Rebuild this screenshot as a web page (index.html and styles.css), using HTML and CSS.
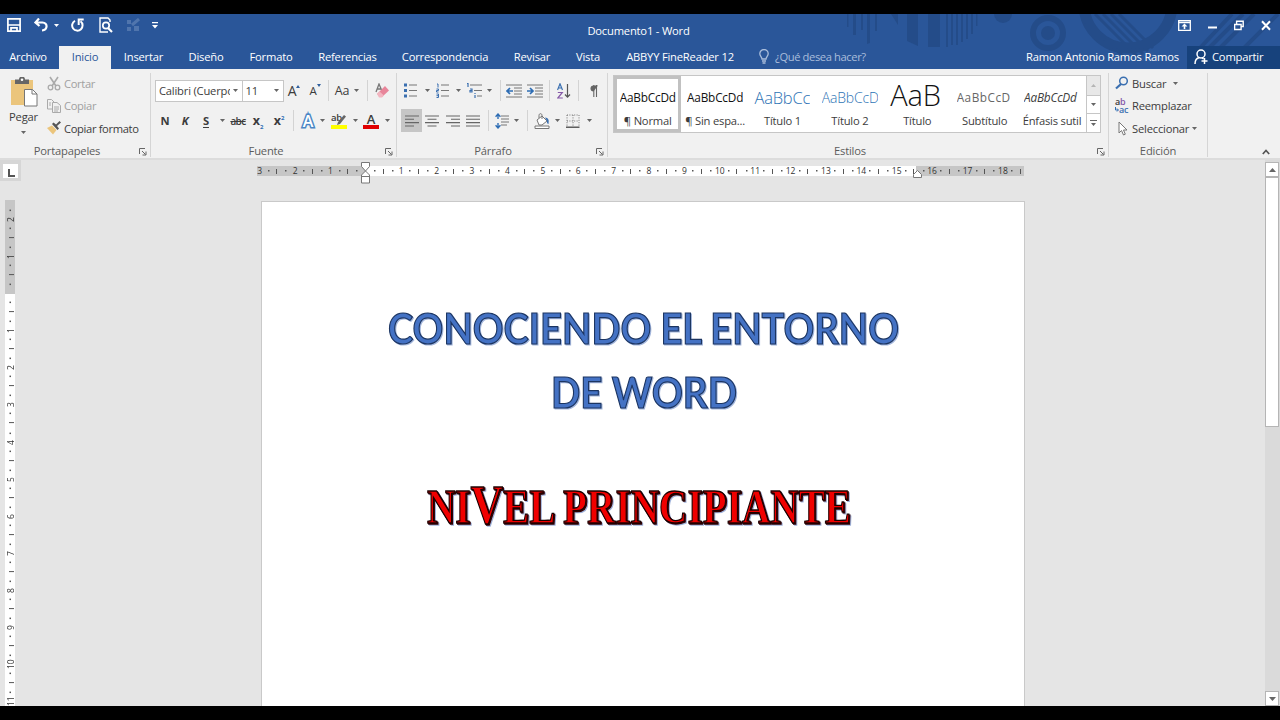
FILE: index.html
```
<!DOCTYPE html>
<html lang="es">
<head>
    <meta charset="UTF-8">
    <meta name="viewport" content="width=device-width, initial-scale=1.0">
    <title>Documento1 - Word</title>
    <link rel="stylesheet" href="styles.css">
</head>
<body>

    <!-- shared icons -->
    <svg width="0" height="0" class="defs">
        <symbol id="down" viewBox="0 0 5 3"><path d="M0 0h5L2.5 3z"/></symbol>
        <symbol id="launch" viewBox="0 0 8 8"><path d="M.5 6V.5H6M3 3l3.5 3.5M7 3.5V7H3.5" fill="none" stroke="#666"/></symbol>
    </svg>

    <div class="app">
        <header class="top">
            <svg class="pattern" width="440" height="55" viewBox="840 14 440 55">
                <g fill="#244c89">
                    <path d="M847 14h1.500v13h-1.500zM853 14h3v21h-3zM861 14h2v16h-2zM867 14h3v29l-3 1zM875 14h2v17h-2zM891 14h7v11zM907 14h11v32l-11-5zM928 14h12v33h-12zM946 14h2v33h-2zM951 14h2v31h-2zM956 14h2v31h-2zM961 14h2v28h-2zM966 14h2v25h-2zM971 14h2v20h-2zM976 14h1.500v12h-1.500z"/>
                    <circle cx="1003" cy="14" r="9"/>
                    <circle cx="1048" cy="33" r="7"/>
                </g>
                <g fill="none" stroke="#244c89">
                    <circle cx="1048" cy="33" r="15" stroke-width="6"/>
                    <circle cx="1128" cy="4" r="44" stroke-width="11"/>
                    <path d="M1095 14l42 42M1103 14l40 40M1111 14l37 37M1119 14l34 34M1085 22l38 34" stroke-width="3"/>
                    <path d="M1232 14l-32 34M1243 14l-34 34M1254 14l-34 34M1278 14l-34 34" stroke-width="4"/>
                </g>
            </svg>

            <div class="titlebar">
                <div class="quick">
                    <svg width="14" height="14" viewBox="0 0 14 14"><path d="M.9.9h12.200v12.200H.9zM1 7h12M4 13V9.800h6V13" fill="none" stroke="#fff" stroke-width="1.700"/></svg>
                    <svg width="14" height="14" viewBox="0 0 14 14"><path d="M5 .5L1.500 4.500 5.500 8M2 4.500h6.500c5.500 0 5.500 7.500-.5 8" fill="none" stroke="#fff" stroke-width="2.200"/></svg>
                    <svg class="w" width="5" height="3"><use href="#down"/></svg>
                    <svg width="14" height="14" viewBox="0 0 14 14"><path d="M4 2.800a5.200 5.200 0 1 0 5.500.5M7.700 7V1.500h5" fill="none" stroke="#fff" stroke-width="2"/></svg>
                    <svg width="14" height="16" viewBox="0 0 14 16"><path d="M11 5V3L9 1H1v14h8" fill="none" stroke="#fff" stroke-width="1.400"/><circle cx="7" cy="8.500" r="3.200" fill="none" stroke="#fff" stroke-width="1.700"/><path d="M9 11l4 4" stroke="#fff" stroke-width="2.200"/></svg>
                    <svg width="14" height="14" viewBox="0 0 14 14" opacity=".3"><path d="M1 2h4v4H1zM1 9h4v4H1zM8 8h5v5H8z" fill="#a9bddb"/><path d="M6 7l7-6" stroke="#a9bddb" stroke-width="3"/></svg>
                    <svg width="6" height="7" viewBox="0 0 6 7"><path d="M0 0h6v1.300H0zM0 3h6L3 6.500z" fill="#fff"/></svg>
                </div>
                <div class="doc-name">Documento1 - Word</div>
                <div class="window">
                    <svg width="13" height="11" viewBox="0 0 13 11"><path d="M.7.7h11.600v9.600H.7zM.7 2.500h11.600" fill="none" stroke="#fff" stroke-width="1.300"/><path d="M6.500 3.500l3 3H7.300V9H5.700V6.500H3.500z" fill="#fff"/></svg>
                    <svg width="9" height="11" viewBox="0 0 9 11"><path d="M0 6.500h9v2H0z" fill="#fff"/></svg>
                    <svg width="10" height="11" viewBox="0 0 10 11"><path d="M.6 4.500h6.500v5H.6zM2.600 4V1.300h6.600v5.200H7" fill="none" stroke="#fff" stroke-width="1.400"/></svg>
                    <svg width="10" height="11" viewBox="0 0 10 11"><path d="M1 1.200l8 8.600M9 1.200L1 9.800" stroke="#fff" stroke-width="2"/></svg>
                </div>
            </div>

            <nav class="tabs">
                <div>Archivo</div>
                <div class="active">Inicio</div>
                <div>Insertar</div>
                <div>Diseño</div>
                <div>Formato</div>
                <div>Referencias</div>
                <div>Correspondencia</div>
                <div>Revisar</div>
                <div>Vista</div>
                <div>ABBYY FineReader 12</div>
                <div class="tell">
                    <svg width="10" height="15" viewBox="0 0 10 15"><path d="M3 10C3 8 .8 7 .8 4.700a4.200 4.200 0 0 1 8.400 0C9.200 7 7 8 7 10zM3 12h4M3.500 14h3" fill="none" stroke="#a9bddb" stroke-width="1.300"/></svg>
                    ¿Qué desea hacer?
                </div>
                <div class="user">Ramon Antonio Ramos Ramos</div>
                <div class="share">
                    <svg width="14" height="16" viewBox="0 0 14 16"><circle cx="7" cy="5" r="4" fill="none" stroke="#fff" stroke-width="1.500"/><path d="M1 15c0-4 2-6 4.500-6.500M8 9l1.500 1M10.500 9v6M7.500 12h6" fill="none" stroke="#fff" stroke-width="1.500"/></svg>
                    Compartir
                </div>
            </nav>
        </header>

        <section class="ribbon">
            <div class="group clipboard">
                <div class="clip-body">
                    <div class="paste">
                        <svg width="28" height="30" viewBox="0 0 28 30"><path d="M1 3h22v25H1z" fill="#ebc57c"/><path d="M5 2.500h4a3 3 0 0 1 6 0h4V7H5z" fill="#666"/><circle cx="12" cy="2.800" r="1.300" fill="#fff"/><path d="M14.500 12.500h8l4.500 4.500v12H14.500z" fill="#fff" stroke="#777"/><path d="M22 12.500V17h5" fill="none" stroke="#777"/></svg>
                        <span>Pegar</span>
                        <svg width="5" height="3"><use href="#down"/></svg>
                    </div>
                    <div class="clip-list">
                        <div class="off">
                            <svg width="14" height="15" viewBox="0 0 14 15"><path d="M3 1l6 9M11 1L5 10" fill="none" stroke="#aaa" stroke-width="1.600"/><circle cx="3.500" cy="11.500" r="2.300" fill="none" stroke="#aaa" stroke-width="1.300"/><circle cx="10.500" cy="11.500" r="2.300" fill="none" stroke="#aaa" stroke-width="1.300"/></svg>
                            Cortar
                        </div>
                        <div class="off">
                            <svg width="14" height="14" viewBox="0 0 14 14"><path d="M5 10H.5V.5h4L7 3M5.500 3.500H10l3.500 3v7h-8zM2 4h2M2 6h2M7 8h5M7 10h5M7 12h4" fill="none" stroke="#aaa"/></svg>
                            Copiar
                        </div>
                        <div>
                            <svg width="14" height="14" viewBox="0 0 14 14"><path d="M0 7l5-2.500 4.500 4.500L6 13.500z" fill="#ebc57c"/><path d="M5 3l5.500 6 1.500-1.500L10 5l4-3.500L12.500 0 9 3.500 6.500 1.500z" fill="#555"/></svg>
                            Copiar formato
                        </div>
                    </div>
                </div>
                <footer>Portapapeles<svg class="launch" width="8" height="8"><use href="#launch"/></svg></footer>
            </div>

            <div class="group font">
                <div class="row font-1">
                    <div class="combo"><span>Calibri (Cuerpo)</span><svg width="5" height="3"><use href="#down"/></svg></div>
                    <div class="combo size"><span>11</span><svg width="5" height="3"><use href="#down"/></svg></div>
                    <div class="grow">A<svg width="4" height="3" viewBox="0 0 4 3"><path d="M0 3h4L2 0z" fill="#2f5f9e"/></svg></div>
                    <div class="grow small">A<svg width="4" height="3" viewBox="0 0 4 3"><path d="M0 0h4L2 3z" fill="#2f5f9e"/></svg></div>
                    <i></i>
                    <div class="case">Aa</div>
                    <svg width="5" height="3"><use href="#down"/></svg>
                    <i></i>
                    <svg width="14" height="16" viewBox="0 0 14 16"><path d="M1 9l3-8 3 7M2 6h4" fill="none" stroke="#777" stroke-width="1.300"/><path d="M2 11l8-8 4 4.500-7 6.500z" fill="#e8859a"/><path d="M2 11l2.500-2.500 4.500 4L7 14.500H4z" fill="#f3b5c0"/></svg>
                </div>
                <div class="row font-2">
                    <b>N</b>
                    <b class="it">K</b>
                    <b class="un">S</b>
                    <svg width="5" height="3"><use href="#down"/></svg>
                    <span class="strike">abc</span>
                    <b class="idx">x<sub>2</sub></b>
                    <b class="idx">x<sup>2</sup></b>
                    <i></i>
                    <span class="effect">A</span>
                    <svg width="5" height="3"><use href="#down"/></svg>
                    <div class="mark yellow">ab<svg width="10" height="10" viewBox="0 0 10 10"><path d="M0 10l1-3 6-7 2 1.500L3 9z" fill="#666"/></svg></div>
                    <svg width="5" height="3"><use href="#down"/></svg>
                    <div class="mark red">A</div>
                    <svg width="5" height="3"><use href="#down"/></svg>
                </div>
                <footer>Fuente<svg class="launch" width="8" height="8"><use href="#launch"/></svg></footer>
            </div>

            <div class="group para">
                <div class="row para-1">
                    <svg width="14" height="15" viewBox="0 0 14 15"><path d="M0 .5h3v3H0zM0 6h3v3H0zM0 11.500h3v3H0z" fill="#3a6fb0"/><path d="M5 2h8M5 7.500h8M5 13h8" stroke="#777" stroke-width="1.200"/></svg>
                    <svg width="5" height="3"><use href="#down"/></svg>
                    <svg width="14" height="15" viewBox="0 0 14 15"><path d="M1 1h1v3.500M.5 6h2v1.500h-2V9h2M.5 11h2v3.500h-2M.5 12.700h2" fill="none" stroke="#3a6fb0"/><path d="M5 2h8M5 7.500h8M5 13h8" stroke="#777" stroke-width="1.200"/></svg>
                    <svg width="5" height="3"><use href="#down"/></svg>
                    <svg width="17" height="15" viewBox="0 0 17 15"><path d="M1 .5h1V4M4 6h2v3H4V7.500h2M9 10v1M9 12v3" fill="none" stroke="#3a6fb0" stroke-width="1.200"/><path d="M4 2h12M8 7.500h8M11 13h5" stroke="#777" stroke-width="1.200"/></svg>
                    <svg width="5" height="3"><use href="#down"/></svg>
                    <i></i>
                    <svg width="16" height="14" viewBox="0 0 16 14"><path d="M0 1h16M8 4h8M8 7h8M8 10h8M0 13h16" stroke="#777"/><path d="M7 7H1.500M4 4L1 7l3 3" fill="none" stroke="#2e6db4" stroke-width="1.700"/></svg>
                    <svg width="16" height="14" viewBox="0 0 16 14"><path d="M0 1h16M8 4h8M8 7h8M8 10h8M0 13h16" stroke="#777"/><path d="M0 7h5.500M3 4l3 3-3 3" fill="none" stroke="#2e6db4" stroke-width="1.700"/></svg>
                    <i></i>
                    <svg width="14" height="16" viewBox="0 0 14 16"><path d="M.5 7L3 .8 5.500 7M1.500 5h3" fill="none" stroke="#3a6fb0" stroke-width="1.200"/><path d="M.8 9.500h4.500L.8 15h5" fill="none" stroke="#8659a8" stroke-width="1.200"/><path d="M10.500 1v13M8 11.500l2.500 2.700 2.500-2.700" fill="none" stroke="#555" stroke-width="1.200"/></svg>
                    <i></i>
                    <svg width="9" height="12" viewBox="0 0 9 12"><path d="M4.500 6.500a3 3 0 0 1 0-6H9" fill="#666"/><path d="M4.800 0v12M7.500 0v12" stroke="#666" stroke-width="1.100"/></svg>
                </div>
                <div class="row para-2">
                    <div class="on"><svg width="14" height="12" viewBox="0 0 14 12"><path d="M0 1h14M0 4.300h9M0 7.600h14M0 11h9" stroke="#666" stroke-width="1.100"/></svg></div>
                    <svg width="14" height="12" viewBox="0 0 14 12"><path d="M0 1h14M2.500 4.300h9M0 7.600h14M2.500 11h9" stroke="#666" stroke-width="1.100"/></svg>
                    <svg width="14" height="12" viewBox="0 0 14 12"><path d="M0 1h14M5 4.300h9M0 7.600h14M5 11h9" stroke="#666" stroke-width="1.100"/></svg>
                    <svg width="14" height="12" viewBox="0 0 14 12"><path d="M0 1h14M0 4.300h14M0 7.600h14M0 11h14" stroke="#666" stroke-width="1.100"/></svg>
                    <i></i>
                    <svg width="14" height="16" viewBox="0 0 14 16"><path d="M3 1v5M3 10v5M.6 3.700L3 1l2.400 2.700M.6 12.300L3 15l2.400-2.700" fill="none" stroke="#2e6db4" stroke-width="1.400"/><path d="M6 3h8M6 6h8M6 9h8M6 12h6" stroke="#777"/></svg>
                    <svg width="5" height="3"><use href="#down"/></svg>
                    <i></i>
                    <svg width="16" height="16" viewBox="0 0 16 16"><path d="M3 7l5-4 5 5-5 4H5z" fill="#fff" stroke="#777"/><path d="M5 5V2.500C5 0 8 0 8 2.500V6" fill="none" stroke="#777"/><path d="M11 4.500c4 .5 4 3 3.500 6.500-1 0-2-1.500-1.500-3z" fill="#3a6fb0"/><path d="M1 13h14v2.500H1z" fill="#fff" stroke="#777"/></svg>
                    <svg width="5" height="3"><use href="#down"/></svg>
                    <svg width="14" height="14" viewBox="0 0 14 14"><path d="M1 1h12M1 7h12M1 1v12M7 1v12M13 1v12" fill="none" stroke="#777" stroke-dasharray="1 1.400"/><path d="M0 13.200h13.500" stroke="#444" stroke-width="1.300"/></svg>
                    <svg width="5" height="3"><use href="#down"/></svg>
                </div>
                <footer>Párrafo<svg class="launch" width="8" height="8"><use href="#launch"/></svg></footer>
            </div>

            <div class="group styles">
                <div class="gallery">
                    <div class="style selected"><span class="sample">AaBbCcDd</span><span>¶ Normal</span></div>
                    <div class="style"><span class="sample">AaBbCcDd</span><span>¶ Sin espa...</span></div>
                    <div class="style"><span class="sample h1">AaBbCc</span><span>Título 1</span></div>
                    <div class="style"><span class="sample h2">AaBbCcD</span><span>Título 2</span></div>
                    <div class="style"><span class="sample title">AaB</span><span>Título</span></div>
                    <div class="style"><span class="sample sub">AaBbCcD</span><span>Subtítulo</span></div>
                    <div class="style"><span class="sample em">AaBbCcDd</span><span>Énfasis sutil</span></div>
                    <div class="scroller">
                        <div class="dim"><svg width="5" height="3" viewBox="0 0 5 3"><path d="M0 3h5L2.500 0z" fill="#b5b5b5"/></svg></div>
                        <div><svg width="5" height="3"><use href="#down"/></svg></div>
                        <div><svg width="7" height="7" viewBox="0 0 7 7"><path d="M0 0h7v1H0zM1 3h5L3.500 6z"/></svg></div>
                    </div>
                </div>
                <footer>Estilos<svg class="launch" width="8" height="8"><use href="#launch"/></svg></footer>
            </div>

            <div class="group edit">
                <div class="edit-list">
                    <div>
                        <svg width="14" height="14" viewBox="0 0 14 14"><circle cx="8.500" cy="5" r="3.800" fill="none" stroke="#3a6fb0" stroke-width="1.500"/><path d="M6 8l-5 4.500" stroke="#3a6fb0" stroke-width="2.200"/></svg>
                        Buscar <svg class="far" width="5" height="3"><use href="#down"/></svg>
                    </div>
                    <div>
                        <span class="swap"><span>a<em>b</em></span><span class="to"><svg width="4" height="5" viewBox="0 0 4 5"><path d="M.5 0v3H3M2 1.500L3.500 3 2 4.500" fill="none" stroke="#2e6db4"/></svg>ac</span></span>
                        Reemplazar
                    </div>
                    <div>
                        <svg width="14" height="15" viewBox="0 0 14 15"><path d="M4 1v11l2.500-2.500L8.500 14l1.800-.8L8.500 9H12z" fill="#fff" stroke="#777"/></svg>
                        Seleccionar<svg width="5" height="3"><use href="#down"/></svg>
                    </div>
                </div>
                <footer>Edición</footer>
            </div>

            <svg class="collapse" width="8" height="6" viewBox="0 0 8 6"><path d="M.8 5L4 1.500 7.200 5" fill="none" stroke="#555" stroke-width="1.700"/></svg>
        </section>

        <main class="workspace">
            <div class="left">
                <div class="tab-stop"><span></span></div>
                <div class="vruler" id="vruler"></div>
            </div>
            <div class="canvas">
                <div class="hruler-box">
                    <div class="hruler" id="hruler"></div>
                    <svg class="indent" width="9" height="22" viewBox="0 0 9 22"><path d="M.5.500h8v4L4.500 9l4 4v8h-8v-8l4-4-4-4.500zM.5 14.500h8" fill="#fff" stroke="#777"/></svg>
                    <svg class="indent right" width="9" height="8" viewBox="0 0 9 8"><path d="M.5 7.500v-3l4-4 4 4v3z" fill="#fff" stroke="#777"/></svg>
                </div>
                <div class="page">
                    <svg class="wordart" width="762" height="504" viewBox="262 202 762 504">
                        <g class="heading">
                            <text x="388" y="343.500" textLength="511" lengthAdjust="spacingAndGlyphs">CONOCIENDO EL ENTORNO</text>
                            <text x="551" y="408" textLength="186" lengthAdjust="spacingAndGlyphs">DE WORD</text>
                        </g>
                        <text class="level" x="427" y="523" textLength="424" lengthAdjust="spacingAndGlyphs">NI<tspan class="tall">V</tspan>EL PRINCIPIANTE</text>
                    </svg>
                </div>
            </div>
            <div class="scrollbar">
                <div class="arrow"><svg width="7" height="4" viewBox="0 0 7 4"><path d="M0 4h7L3.500 0z"/></svg></div>
                <div class="thumb"></div>
                <div class="arrow last"><svg width="7" height="4" viewBox="0 0 7 4"><path d="M0 0h7L3.500 4z"/></svg></div>
            </div>
        </main>
    </div>

    <script>
        // one cell per centimetre, the number sits in the middle of its cell
        function fillRuler(id, from, to) {
            const ruler = document.getElementById(id);
            for (let n = from; n <= to; n++) {
                const cell = document.createElement('span');
                cell.className = 'cm';
                cell.textContent = n === 0 ? '' : Math.abs(n);
                ruler.appendChild(cell);
            }
        }

        fillRuler('hruler', -3, 18);
        fillRuler('vruler', -2, 11);
    </script>
</body>
</html>
```
FILE: styles.css
```
* {
    box-sizing: border-box;
}
body {
    margin: 0;
    padding: 14px 0;
    height: 720px;
    background: #000;
    overflow: hidden;
    font-family: 'Open Sans', 'Noto Sans', sans-serif;
    font-size: 11.2px;
    letter-spacing: -0.2px;
    color: #3c3c3c;
    white-space: nowrap;
}
svg {
    display: block;
    flex: none;
    fill: #666;
}
.defs {
    position: absolute;
}
.app {
    display: flex;
    flex-direction: column;
    height: 692px;
    overflow: hidden;
    background: #e5e5e5;
}

/* title bar and tabs */
.top {
    position: relative;
    height: 55px;
    background: #2a5699;
    color: #fff;
}
.pattern {
    position: absolute;
    top: 0;
    right: 0;
}
.titlebar {
    position: relative;
    display: grid;
    grid-template-columns: 500px 277px 1fr;
    height: 32px;
}
.quick {
    display: grid;
    grid-template-columns: 28px 26px 4px 40px 16px 38px 6px;
    place-items: center;
    height: 22px;
}
.quick .w {
    fill: #fff;
}
.doc-name {
    padding-top: 9px;
    line-height: 15px;
    text-align: center;
}
.window {
    display: flex;
    justify-content: flex-end;
    align-items: center;
    gap: 17px;
    height: 22px;
    padding-right: 9px;
}
.tabs {
    position: relative;
    display: grid;
    grid-template-columns: 56px 58px 62px 60px 70px 83px 112px 62px 50px 134px 1fr 161px 93px;
    height: 23px;
    line-height: 21px;
    text-align: center;
}
.tabs .active {
    width: 52px;
    margin-left: 3px;
    background: #f1f1f1;
    color: #2a5699;
}
.tabs div:nth-child(3) {
    margin-left: -3px;
}
.tabs .tell {
    display: flex;
    align-items: center;
    gap: 6px;
    padding: 0 0 2px 12px;
    color: #a9bddb;
    letter-spacing: -0.4px;
}
.tabs .user {
    text-align: left;
}
.tabs .share {
    display: flex;
    align-items: center;
    gap: 4px;
    padding: 0 0 2px 7px;
    background: #17427c;
}

/* ribbon */
.ribbon {
    position: relative;
    display: flex;
    height: 91px;
    background: #f1f1f1;
    border-bottom: 2px solid #dcdcdc;
}
.group {
    position: relative;
    display: flex;
    flex-direction: column;
    margin: 4px 0 1px;
    border-right: 1px solid #d5d5d5;
}
.group footer {
    display: flex;
    justify-content: center;
    align-items: center;
    margin-top: auto;
    height: 13px;
    color: #5c5c5c;
}
.launch {
    position: absolute;
    right: 3px;
    bottom: 1px;
}
.clipboard {
    width: 151px;
}
.clipboard footer {
    padding-right: 16px;
}
.font {
    width: 246px;
}
.font footer {
    padding-right: 15px;
}
.para {
    width: 211px;
}
.para footer {
    padding-right: 18px;
}
.styles {
    width: 501px;
}
.styles footer {
    padding-right: 16px;
}
.edit {
    width: 99px;
}
.clip-body {
    display: flex;
}
.paste {
    display: flex;
    flex-direction: column;
    align-items: center;
    width: 47px;
    padding-top: 4px;
}
.paste span {
    margin: 1px 0 5px;
    line-height: 18px;
}
.clip-list div,
.edit-list div {
    display: flex;
    align-items: center;
    gap: 3px;
    height: 22.5px;
}
.clip-list {
    margin-top: -1px;
}
.edit-list {
    margin-top: -1px;
    padding-left: 6px;
}
.clip-list div {
    letter-spacing: -0.35px;
}
.clip-list div.off {
    color: #a0a0a0;
}
.row {
    display: grid;
    align-items: center;
    justify-items: center;
    padding-left: 4px;
}
.row i {
    width: 1px;
    height: 21px;
    background: #d3d3d3;
}
.font-1 {
    grid-template-columns: 88px 40px 22px 20px 6px 22px 6px 16px 14px;
    height: 35px;
}
.font-2 {
    grid-template-columns: 20px 20px 22px 10px 22px 18px 24px 5px 24px 5px 28px 4px 28px 4px;
    height: 25px;
}
.para-1 {
    grid-template-columns: 20px 12px 20px 11px 20px 10px 12px 16px 26px 3px 26px 2px 28px;
    height: 35px;
}
.para-2 {
    grid-template-columns: 21px 20px 22px 18px 12px 16px 12px 10px 20px 10px 22px 10px;
    height: 25px;
}
.combo {
    display: flex;
    align-items: center;
    justify-content: space-between;
    width: 88px;
    height: 22px;
    padding: 0 4px 0 3px;
    background: #fff;
    border: 1px solid #c6c6c6;
}
.combo span {
    width: 71px;
    overflow: hidden;
}
.size {
    width: 41px;
    border-left: 0;
}
.size span {
    width: auto;
}
.grow {
    display: flex;
    font-size: 14px;
}
.grow svg {
    margin-top: 4px;
}
.small {
    font-size: 11.5px;
}
.small svg {
    margin-top: 1px;
}
.case {
    font-size: 12.5px;
}
.it {
    font-style: italic;
}
.un {
    text-decoration: underline;
    text-underline-offset: 2px;
}
.strike {
    font-size: 10px;
    font-weight: 600;
    letter-spacing: -0.6px;
    text-decoration: line-through;
}
.idx {
    font-size: 12.5px;
    line-height: 14px;
}
.idx sub,
.idx sup {
    font-size: 6px;
    line-height: 0;
    color: #2e6db4;
}
.effect {
    font-size: 16px;
    font-weight: 600;
    line-height: 18px;
    color: #fff;
    -webkit-text-stroke: 3px #4a86c5;
    paint-order: stroke fill;
}
.mark {
    display: flex;
    justify-content: center;
    width: 16px;
    height: 16px;
    border-bottom: 4px solid #ff0;
    font-size: 9.5px;
    font-weight: 600;
    line-height: 9px;
}
.mark svg {
    margin: 2px 0 0 -5px;
}
.red {
    border-color: #e00000;
    font-size: 13px;
    line-height: 12px;
}
.on {
    display: flex;
    align-items: center;
    justify-content: center;
    width: 21px;
    height: 23px;
    background: #c6c6c6;
}
.gallery {
    display: grid;
    grid-template-columns: repeat(7, 67.4px) 1fr;
    width: 488px;
    height: 58px;
    margin: 2px 0 0 5px;
    background: #fff;
    border: 1px solid #c6c6c6;
}
.style {
    display: flex;
    flex-direction: column;
    align-items: center;
    padding-top: 8px;
    line-height: 17px;
}
.selected {
    padding-top: 5px;
    border: 3px solid #c1c1c1;
}
.sample {
    display: flex;
    align-items: center;
    width: 56px;
    height: 26px;
    margin-bottom: 2px;
    overflow: hidden;
    color: #111;
    font-size: 11.8px;
}
.h1 {
    font-size: 16.5px;
    font-weight: 300;
    color: #2e74b5;
}
.h2 {
    font-size: 14px;
    font-weight: 300;
    color: #2e74b5;
}
.title {
    width: 58px;
    height: 34px;
    margin: -7px 0 1px;
    padding-left: 2px;
    font-size: 29px;
    font-weight: 300;
}
.sub {
    color: #666;
    letter-spacing: 0.5px;
}
.em {
    font-style: italic;
    color: #404040;
}
.scroller {
    display: grid;
    grid-template-rows: 20px 18px 18px;
    border-left: 1px solid #c6c6c6;
}
.scroller div {
    display: flex;
    align-items: center;
    justify-content: center;
    border-bottom: 1px solid #c6c6c6;
}
.scroller div:last-child {
    border: 0;
}
.scroller .dim {
    background: #e8e8e8;
}
.far {
    margin-left: 4px;
}
.swap {
    width: 14px;
    font-size: 9px;
    font-weight: 600;
    line-height: 8px;
}
.swap span {
    display: block;
}
.swap .to {
    display: flex;
    align-items: center;
    color: #3a6fb0;
}
.swap em {
    font-style: normal;
    color: #8659a8;
}
.collapse {
    position: absolute;
    right: 10px;
    bottom: 3px;
}

/* rulers and page */
.workspace {
    display: flex;
    flex: 1;
    min-height: 0;
}
.left {
    width: 21px;
}
.tab-stop {
    width: 21px;
    height: 21px;
    padding: 4px 3px;
    background: #d6d6d6;
}
.tab-stop span {
    display: flex;
    width: 15px;
    height: 14px;
    padding: 5px 3px 3px 5px;
    background: #fff;
}
.tab-stop span::after {
    content: "";
    width: 6px;
    height: 6px;
    border: solid #555;
    border-width: 0 0 2px 2px;
}
.vruler {
    display: flex;
    flex-direction: column;
    width: 10px;
    height: 507px;
    margin: 19px 0 0 5px;
    padding-top: 1px;
    overflow: hidden;
    background: linear-gradient(#c6c6c6 94px, #fff 94px);
}
.cm {
    display: flex;
    flex: none;
    align-items: center;
    justify-content: center;
    font-size: 8.5px;
    letter-spacing: 0;
    color: #333;
    background-repeat: no-repeat;
    background-image: linear-gradient(#555, #555), linear-gradient(#555, #555), linear-gradient(#555, #555);
}
.vruler .cm {
    width: 10px;
    height: 37.1px;
    writing-mode: vertical-rl;
    transform: rotate(180deg);
    background-size: 1.5px 1.5px, 1.5px 1.5px, 5px 1px;
    background-position: 4px 8.5px, 4px 27px, 1px 0;
}
.hruler-box {
    position: relative;
    width: 767px;
    margin-top: 6px;
}
.hruler {
    display: flex;
    height: 10px;
    overflow: hidden;
    background: linear-gradient(90deg, #c6c6c6 109px, #fff 109px, #fff 659px, #c6c6c6 659px);
}
.hruler .cm {
    width: 35.4px;
    height: 9px;
    background-size: 1.5px 1.5px, 1.5px 1.5px, 1px 5px;
    background-position: 8.1px 4px, 25.8px 4px, 34.4px 3px;
}
.hruler .cm:first-child {
    margin-left: -15px;
}
.indent {
    position: absolute;
    top: -4px;
    left: 104px;
}
.indent.right {
    top: 4px;
    left: 656px;
}
.canvas {
    width: 1244px;
    padding-left: 236px;
}
.page {
    width: 764px;
    height: 520px;
    margin: 25px 0 0 4px;
    background: #fff;
    border: 1px solid #c9c9c9;
}
.heading {
    font: 700 42px Lato, sans-serif;
    letter-spacing: 0;
    fill: #4472c4;
    stroke: #1c3561;
    stroke-width: 1.2px;
    filter: drop-shadow(1.5px 1.5px 0.5px #a3b6dc);
}
.level {
    font: 700 48px 'Liberation Serif', serif;
    letter-spacing: 0;
    fill: #f00000;
    stroke: #1a0000;
    stroke-width: 1.3px;
    filter: drop-shadow(1px 1px 0 #300) drop-shadow(1.5px 1.5px 0.5px #9db1da);
}
.tall {
    font-size: 55px;
}
.scrollbar {
    display: flex;
    flex-direction: column;
    width: 15px;
    padding-top: 2px;
    background: #dadada;
}
.arrow {
    display: flex;
    align-items: center;
    justify-content: center;
    width: 14px;
    height: 15px;
    background: #fff;
    border: 1px solid #b5b5b5;
}
.thumb {
    width: 14px;
    height: 250px;
    background: #fff;
    border: 1px solid #b5b5b5;
}
.last {
    margin-top: auto;
}
```
